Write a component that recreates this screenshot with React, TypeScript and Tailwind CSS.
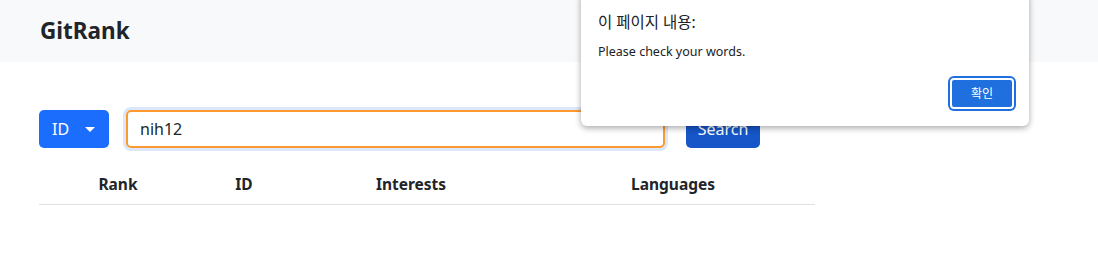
import React from 'react';

const font = { fontFamily: '"Noto Sans", "Noto Sans CJK KR", sans-serif' };

function Header() {
  return (
    <div className="h-[62px] bg-[#f8f9fa] flex items-center px-[40px]">
      <h1 className="text-[22.5px] font-bold text-[#212529] leading-none">GitRank</h1>
    </div>
  );
}

function SearchBar() {
  return (
    <div className="flex items-center mt-[48px] px-[39px]">
      <button className="h-[38px] w-[70px] bg-[#1b6efd] rounded-[5px] text-white text-[16px] flex items-center pl-[13px] pr-[14px] justify-between">
        <span>ID</span>
        <span className="w-0 h-0 border-l-[5px] border-r-[5px] border-t-[5px] border-l-transparent border-r-transparent border-t-white" />
      </button>
      <div className="ml-[17px] w-[539px] h-[38px] rounded-[5px] border-2 border-[#fd9a2f] ring-[3px] ring-[#dbe7fb] flex items-center pl-[12px] text-[16px] text-[#212529]">
        nih12
      </div>
      <button className="ml-[21px] h-[38px] w-[74px] bg-[#1656c9] rounded-[5px] text-white text-[16px]">Search</button>
    </div>
  );
}

function Table() {
  return (
    <div className="mx-[39px] mt-[21px] w-[776px] grid grid-cols-[158px_94px_240px_284px] border-b border-[#dee2e6] h-[36px] items-center pb-[3px] text-[15.5px] font-bold text-[#212529]">
      <div className="text-center">Rank</div>
      <div className="text-center">ID</div>
      <div className="text-center">Interests</div>
      <div className="text-center">Languages</div>
    </div>
  );
}

function AlertDialog() {
  return (
    <div className="absolute left-[581px] top-[-8px] w-[448px] h-[134px] bg-white rounded-[6px] shadow-[0_2px_6px_rgba(0,0,0,0.35)] pt-[19px] px-[17px]">
      <div className="text-[15.5px] text-[#202124]">이 페이지 내용:</div>
      <div className="mt-[9px] text-[12.5px] text-[#202124]">Please check your words.</div>
      <div className="flex justify-end mt-[16px] mr-[-2px]">
        <button className="w-[64px] h-[31px] rounded-[4px] bg-[#1f6fdf] text-white text-[12px] border-2 border-white ring-2 ring-[#1f6fdf]">확인</button>
      </div>
    </div>
  );
}

export default function App() {
  return (
    <div className="relative w-[1098px] h-[279px] bg-white overflow-hidden" style={font}>
      <Header />
      <SearchBar />
      <Table />
      <AlertDialog />
    </div>
  );
}
